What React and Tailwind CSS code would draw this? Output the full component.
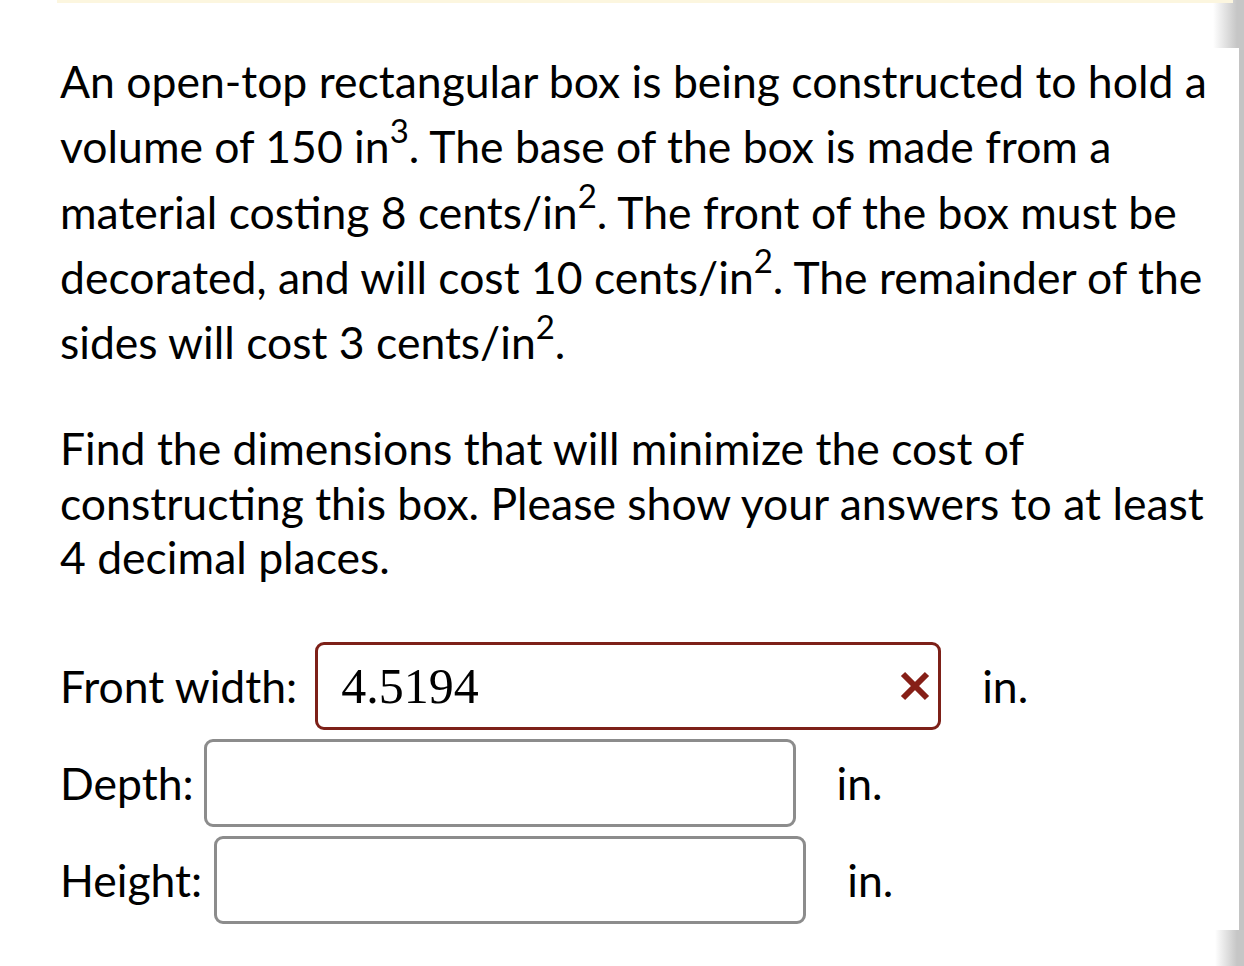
import React from "react";

function XMark() {
  return (
    <svg width="30" height="30" viewBox="0 0 30 30" className="shrink-0">
      <path d="M3 3 L27 27 M27 3 L3 27" stroke="#861f17" strokeWidth="6" strokeLinecap="butt" />
    </svg>
  );
}

function Sup({ children }) {
  return <sup className="top-[-0.62em] text-[0.74em]">{children}</sup>;
}

function Row({ label, gap, boxW, error, value, mt }) {
  return (
    <div className={`flex items-center ${mt}`}>
      <span className="whitespace-nowrap">{label}</span>
      <div
        className={`${gap} h-[88px] ${boxW} rounded-[9px] border-[3px] ${
          error ? "border-[#7d2018]" : "border-[#8c8c8c]"
        } flex items-center pl-[23px] pr-[8px]`}
      >
        <span
          className="flex-1 text-[50px] leading-none"
          style={{ fontFamily: '"Liberation Serif", "DejaVu Serif", serif' }}
        >
          {value}
        </span>
        {error && <XMark />}
      </div>
      <span className="ml-[41px] whitespace-nowrap">in.</span>
    </div>
  );
}

export default function App() {
  return (
    <div
      className="w-[1244px] h-[966px] overflow-hidden bg-white text-black flex flex-col"
      style={{ fontFamily: 'Lato, "Open Sans", sans-serif' }}
    >
      <div className="h-[50px] shrink-0 bg-[linear-gradient(to_right,#ffffff_1213px,#c6c6c6_1237px)]">
        <div className="ml-[57px] w-[1176px] h-[3px] bg-[#fcf6df]" />
      </div>
      <div className="flex flex-1 min-h-0">
        <div className="flex-1 bg-white pl-[60px] text-[44.5px] -mt-[2px]">
          <div className="leading-[65.3px]">
            <div className="whitespace-nowrap">An open-top rectangular box is being constructed to hold a</div>
            <div className="whitespace-nowrap">
              volume of 150 in<Sup>3</Sup>. The base of the box is made from a
            </div>
            <div className="whitespace-nowrap">
              material costing 8 cents/in<Sup>2</Sup>. The front of the box must be
            </div>
            <div className="whitespace-nowrap">
              decorated, and will cost 10 cents/in<Sup>2</Sup>. The remainder of the
            </div>
            <div className="whitespace-nowrap">
              sides will cost 3 cents/in<Sup>2</Sup>.
            </div>
          </div>
          <div className="mt-[47px] leading-[54.5px]">
            <div className="whitespace-nowrap">Find the dimensions that will minimize the cost of</div>
            <div className="whitespace-nowrap">constructing this box. Please show your answers to at least</div>
            <div className="whitespace-nowrap">4 decimal places.</div>
          </div>
          <div className="mt-[57px]">
            <Row label="Front width:" gap="ml-[18px]" boxW="w-[626px]" error value="4.5194" mt="" />
            <Row label="Depth:" gap="ml-[10px]" boxW="w-[592px]" mt="mt-[9px]" />
            <Row label="Height:" gap="ml-[12px]" boxW="w-[592px]" mt="mt-[9px]" />
          </div>
        </div>
        <div className="w-[5px] shrink-0 bg-[#c4c4c4]" />
      </div>
      <div className="h-[36px] shrink-0 bg-[linear-gradient(to_right,#ffffff_1215px,#c6c6c6_1237px)]" />
    </div>
  );
}
